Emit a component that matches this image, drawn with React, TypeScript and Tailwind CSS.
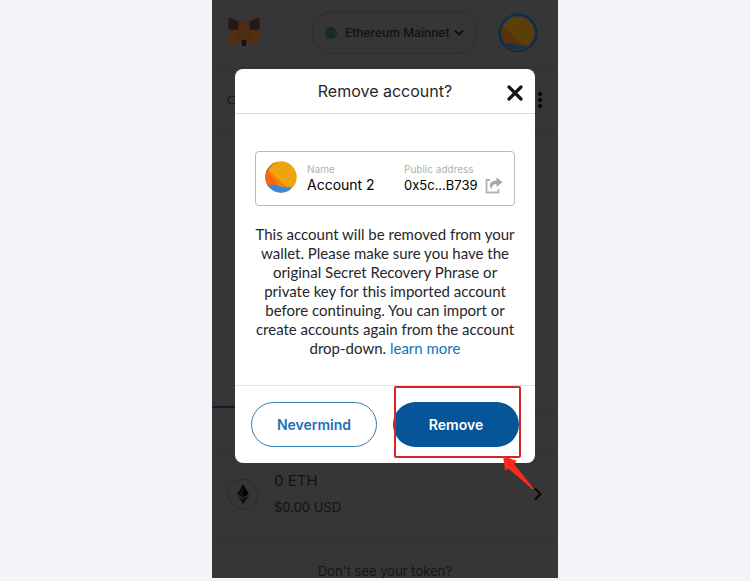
import React from "react";

function Fox() {
  return (
    <svg viewBox="0 0 34 32" className="h-8 w-[34px]" aria-hidden="true">
      <path d="M2 1 L11 5 H23 L32 1 L33 11 L31 17 L33 23 L30 28 L22 27 L19 30 H15 L12 27 L4 28 L1 23 L3 17 L1 11 Z" fill="#4d2d14" />
      <path d="M2 1 L12 6 L14 11 L10 14 L3 14 L1 11 Z M32 1 L22 6 L20 11 L24 14 L31 14 L33 11 Z" fill="#211a17" />
      <path d="M12 6 H22 L23 15 L19 25 H15 L11 15 Z" fill="#4e2c12" />
      <path d="M3 15 L11 14 L15 25 L12 27 L4 28 L1 23 Z M31 15 L23 14 L19 25 L22 27 L30 28 L33 23 Z" fill="#532f12" />
      <path d="M9 18 L13 19 L12 21 Z M25 18 L21 19 L22 21 Z" fill="#38281c" />
      <path d="M15 24 H19 L20 28 L19 30 H15 L14 28 Z" fill="#161413" />
      <path d="M12 27 L15 30 L14 26 Z M22 27 L19 30 L20 26 Z" fill="#443f3b" />
    </svg>
  );
}

function HeaderAvatar() {
  return (
    <svg viewBox="0 0 40 40" className="size-10" aria-hidden="true">
      <circle cx="20" cy="20" r="18.5" fill="#353535" stroke="#0c2c49" strokeWidth="2" />
      <clipPath id="headerDisc"><circle cx="20" cy="20" r="16" /></clipPath>
      <g clipPath="url(#headerDisc)">
        <rect width="40" height="40" fill="#5a3f09" />
        <path d="M2 8 L8 16 L26 33 L0 34 Z" fill="#58320c" />
        <path d="M3 31 Q13 29 19 32 Q24 34 29 32 V40 H3 Z" fill="#15304f" />
      </g>
    </svg>
  );
}

function AccountAvatar() {
  return (
    <svg viewBox="0 0 32 32" className="size-8 shrink-0" aria-hidden="true">
      <clipPath id="accountDisc"><circle cx="16" cy="16" r="15.7" /></clipPath>
      <g clipPath="url(#accountDisc)">
        <rect width="32" height="32" fill="#eda50f" />
        <path d="M0 4 L4 10 L23 27 L0 27 Z" fill="#f3800f" />
        <path d="M0 8 L4 12 L14 26 L0 25 Z" fill="#f7660f" />
        <path d="M0 11 Q2 5 9 0 L12 1 Q5 4 3 11 Z" fill="#b9672a" />
        <path d="M2 24 Q9 23 14 25 Q19 27 26 26 V32 H2 Z" fill="#3889dc" />
      </g>
    </svg>
  );
}

function Wallet() {
  return (
    <div className="flex h-full flex-col *:shrink-0">
      <header className="flex h-[68px] items-start border-b border-[#303030] pr-5 pl-[15px]">
        <div className="flex h-16 items-center"><Fox /></div>
        <button className="mt-[11px] mr-[21px] ml-auto flex h-[43px] w-[165px] items-center rounded-full border border-[#2d2d2d] pl-3 text-[12px] font-medium text-[#111]">
          <span className="mr-2 size-3 rounded-full bg-[#192928]" />
          Ethereum Mainnet
          <svg viewBox="0 0 10 8" className="mr-3 ml-auto h-2 w-2.5" aria-hidden="true">
            <path d="M1 1.5 L5 5.5 L9 1.5" fill="none" stroke="#090909" strokeWidth="1.6" />
          </svg>
        </button>
        <button aria-label="Accounts" className="mt-[13px]"><HeaderAvatar /></button>
      </header>
      <div className="flex h-[64px] items-center justify-between border-b border-[#303030] pr-4 pl-[15px]">
        <svg viewBox="0 0 10 10" className="size-2.5" aria-hidden="true">
          <circle cx="5" cy="5" r="4" fill="none" stroke="#161616" strokeWidth="1.2" />
        </svg>
        <button aria-label="Account options" className="flex flex-col gap-0.5">
          <span className="size-1 rounded-full bg-black" />
          <span className="size-1 rounded-full bg-black" />
          <span className="size-1 rounded-full bg-black" />
        </button>
      </div>
      <div className="h-[274px]" />
      <div className="flex h-[44px] items-start border-b border-[#303030]">
        <span className="h-0.5 w-1/2 bg-[#0a202e]" />
        <span className="mt-1 h-px w-1/2 bg-[#303030]" />
      </div>
      <div className="flex h-[93px] items-center border-b border-[#303030] pr-4 pb-1 pl-[15px]">
        <svg viewBox="0 0 32 32" className="size-8" aria-hidden="true">
          <circle cx="16" cy="16" r="15" fill="none" stroke="#2c2c2c" />
          <path d="M16 6 L10 16 L16 20 Z" fill="#111" />
          <path d="M16 6 L22 16 L16 20 Z" fill="#050505" />
          <path d="M10 18 L16 26 V21 Z" fill="#171717" />
          <path d="M22 18 L16 26 V21 Z" fill="#080808" />
        </svg>
        <div className="ml-[15px] text-[#121212]">
          <p className="text-[15px] leading-[26px]">0 ETH</p>
          <p className="text-[13px] leading-[26px]">$0.00 USD</p>
        </div>
        <svg viewBox="0 0 8 14" className="ml-auto h-3.5 w-2" aria-hidden="true">
          <path d="M1 1.5 L6.5 7 L1 12.5" fill="none" stroke="#060606" strokeWidth="2" />
        </svg>
      </div>
      <p className="pt-[18px] text-center text-[13px] leading-5 text-[#161616]">Don't see your token?</p>
    </div>
  );
}

function RemoveDialog() {
  return (
    <section role="dialog" aria-labelledby="dialog-title" className="absolute inset-x-[23px] top-[69px] rounded-lg bg-white text-[#24272a]">
      <header className="relative flex h-[45px] items-center justify-center border-b border-[#d9dcdf]">
        <h1 id="dialog-title" className="text-[16px]">Remove account?</h1>
        <button aria-label="Close" className="absolute top-4 right-3">
          <svg viewBox="0 0 16 16" className="size-4" aria-hidden="true">
            <path d="M2 2 L14 14 M14 2 L2 14" stroke="#151515" strokeWidth="3.2" strokeLinecap="round" />
          </svg>
        </button>
      </header>
      <div className="border-b border-[#e2e4e6] px-5 pt-[37px] pb-[27px]">
        <div className="flex h-[55px] items-start rounded border border-[#b8b8b8] pt-[9px] pr-[11px] pl-[9px]">
          <AccountAvatar />
          <div className="ml-[10px] w-[97px]">
            <p className="text-[10px] leading-4 text-[#b0b0b0]">Name</p>
            <p className="text-[14px] leading-4 text-black">Account 2</p>
          </div>
          <div className="whitespace-nowrap">
            <p className="text-[10px] leading-4 text-[#b0b0b0]">Public address</p>
            <p className="text-[13px] leading-4 text-black">0x5c...B739</p>
          </div>
          <a href="#explorer" aria-label="View on explorer" className="mt-4 ml-auto">
            <svg viewBox="0 0 18 17" className="h-[17px] w-[18px]" aria-hidden="true">
              <path d="M5 3 H1.5 V15.5 H13.5 V12" fill="none" stroke="#b3b3b3" strokeWidth="1.8" />
              <path d="M11.5 0.5 L17.5 5.2 L11.5 10 V7 Q7 7 6.5 12 Q4 9 5.5 6 Q7 3.5 11.5 3.5 Z" fill="#a8a8a8" />
            </svg>
          </a>
        </div>
        <p className="mt-[19px] text-center font-['Lato','Liberation_Sans',sans-serif] text-[15px] leading-[19px] [font-variant-ligatures:none]">
          This account will be removed from your wallet. Please make sure you have the original Secret Recovery Phrase or private key for this imported account before continuing. You can import or create accounts again from the account drop-down.{" "}
          <a href="#learn" className="text-[#1672b3]">learn more</a>
        </p>
      </div>
      <footer className="grid grid-cols-2 gap-4 p-4 text-[14px] font-semibold">
        <button className="h-[45px] rounded-full border border-[#347fa9] text-[#1b70b8]">Nevermind</button>
        <button className="h-[45px] rounded-full bg-[#065598] text-white">Remove</button>
      </footer>
    </section>
  );
}

export default function App() {
  return (
    <div className="min-h-screen bg-[#f3f3f9] pl-5 font-['Inter','Liberation_Sans',sans-serif]">
      <main className="relative mx-auto h-[578px] max-w-[346px] bg-[#363636]">
        <div className="h-full overflow-hidden"><Wallet /></div>
        <RemoveDialog />
        <div className="absolute top-[386px] right-[37px] h-[72px] w-[127px] rounded-xs border-2 border-[#d32625]" />
        <svg viewBox="0 0 36 40" className="absolute top-[455px] right-[22px] h-10 w-9" aria-hidden="true">
          <path d="M3 1 L17 6 L14 9 L34 34 L32 34 L9 14 L5 15 Z" fill="#fb2a1c" />
        </svg>
      </main>
    </div>
  );
}
